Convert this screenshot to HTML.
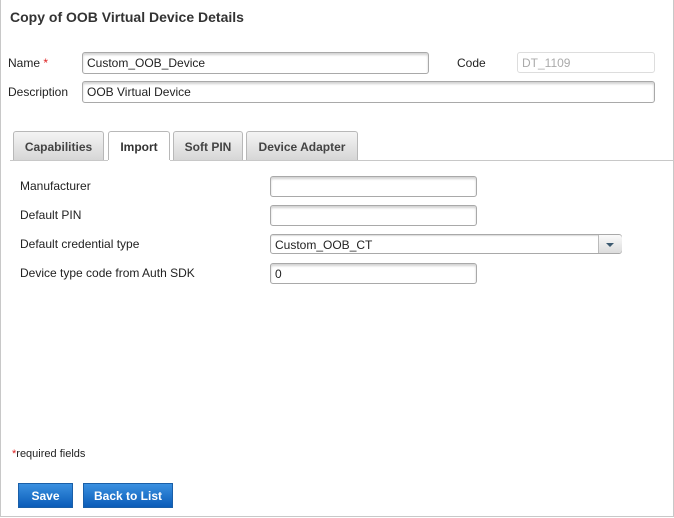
<!DOCTYPE html>
<html><head><style>
body{margin:0;width:674px;height:518px;position:relative;background:#fff;font-family:"Liberation Sans",Arial,sans-serif;font-size:12px;color:#222;overflow:hidden}
.a{position:absolute}
.frame{left:0;top:0;width:672px;height:516px;border:1px solid #c8c8c8;border-top:none}
.in{position:absolute;box-sizing:border-box;border:1px solid #a9a9a9;border-radius:3px;box-shadow:inset 0 2px 2px rgba(0,0,0,.18);background:#fff;padding-left:4px;padding-top:1px;line-height:19px;font-size:12px}
.tab{position:absolute;top:131px;height:29px;box-sizing:border-box;border:1px solid #b8b8b8;border-bottom:none;border-radius:3px 3px 0 0;background:linear-gradient(#f4f4f4,#d6d6d6);font-weight:bold;color:#444;text-align:center;line-height:31px;font-size:12px}
.btn{position:absolute;top:483px;height:25px;box-sizing:border-box;border:1px solid #1a5fa8;background:linear-gradient(#3a90e0,#0b5cb8);color:#fff;font-weight:bold;font-size:12px;text-align:center;line-height:25px}
.lb{position:absolute;font-size:12px}
</style></head><body>
<div class="a frame"></div>
<div class="a" style="left:10px;top:9px;font-size:14px;font-weight:bold;color:#333">Copy of OOB Virtual Device Details</div>
<div class="lb" style="left:8px;top:56px">Name<span style="color:#d22"> *</span></div>
<div class="in" style="left:82px;top:52px;width:347px;height:22px">Custom_OOB_Device</div>
<div class="lb" style="left:457px;top:56px">Code</div>
<div class="in" style="left:517px;top:52px;width:138px;height:21px;color:#aaa;border-color:#ddd;box-shadow:none">DT_1109</div>
<div class="lb" style="left:8px;top:85px">Description</div>
<div class="in" style="left:82px;top:81px;width:573px;height:22px">OOB Virtual Device</div>
<div class="tab" style="left:13px;width:91px">Capabilities</div>
<div class="tab" style="left:108px;width:62px;background:#fff;height:30px;color:#333">Import</div>
<div class="tab" style="left:173px;width:70px">Soft PIN</div>
<div class="tab" style="left:246px;width:112px">Device Adapter</div>
<div class="a" style="left:10px;top:160px;width:663px;height:1px;background:#c8c8c8"></div>
<div class="a" style="left:108px;top:160px;width:62px;height:1px;background:#fff"></div>
<div class="lb" style="left:20px;top:179px">Manufacturer</div>
<div class="in" style="left:270px;top:176px;width:207px;height:21px"></div>
<div class="lb" style="left:20px;top:208px">Default PIN</div>
<div class="in" style="left:270px;top:205px;width:207px;height:21px"></div>
<div class="lb" style="left:20px;top:237px">Default credential type</div>
<div class="in" style="left:270px;top:234px;width:352px;height:20px;box-shadow:inset 0 1px 1px rgba(0,0,0,.15)">Custom_OOB_CT</div>
<div class="a" style="left:598px;top:235px;width:23px;height:18px;border-left:1px solid #bbb;background:linear-gradient(#fafafa,#dcdcdc);border-radius:0 3px 3px 0"></div>
<div class="a" style="left:606px;top:243px;width:0;height:0;border-left:4px solid transparent;border-right:4px solid transparent;border-top:4px solid #3d5a70"></div>
<div class="lb" style="left:20px;top:266px">Device type code from Auth SDK</div>
<div class="in" style="left:270px;top:263px;width:207px;height:21px">0</div>
<div class="a" style="left:12px;top:448px;font-size:11px"><span style="color:#d22">*</span>required fields</div>
<div class="btn" style="left:18px;width:55px">Save</div>
<div class="btn" style="left:83px;width:90px">Back to List</div>
</body></html>
